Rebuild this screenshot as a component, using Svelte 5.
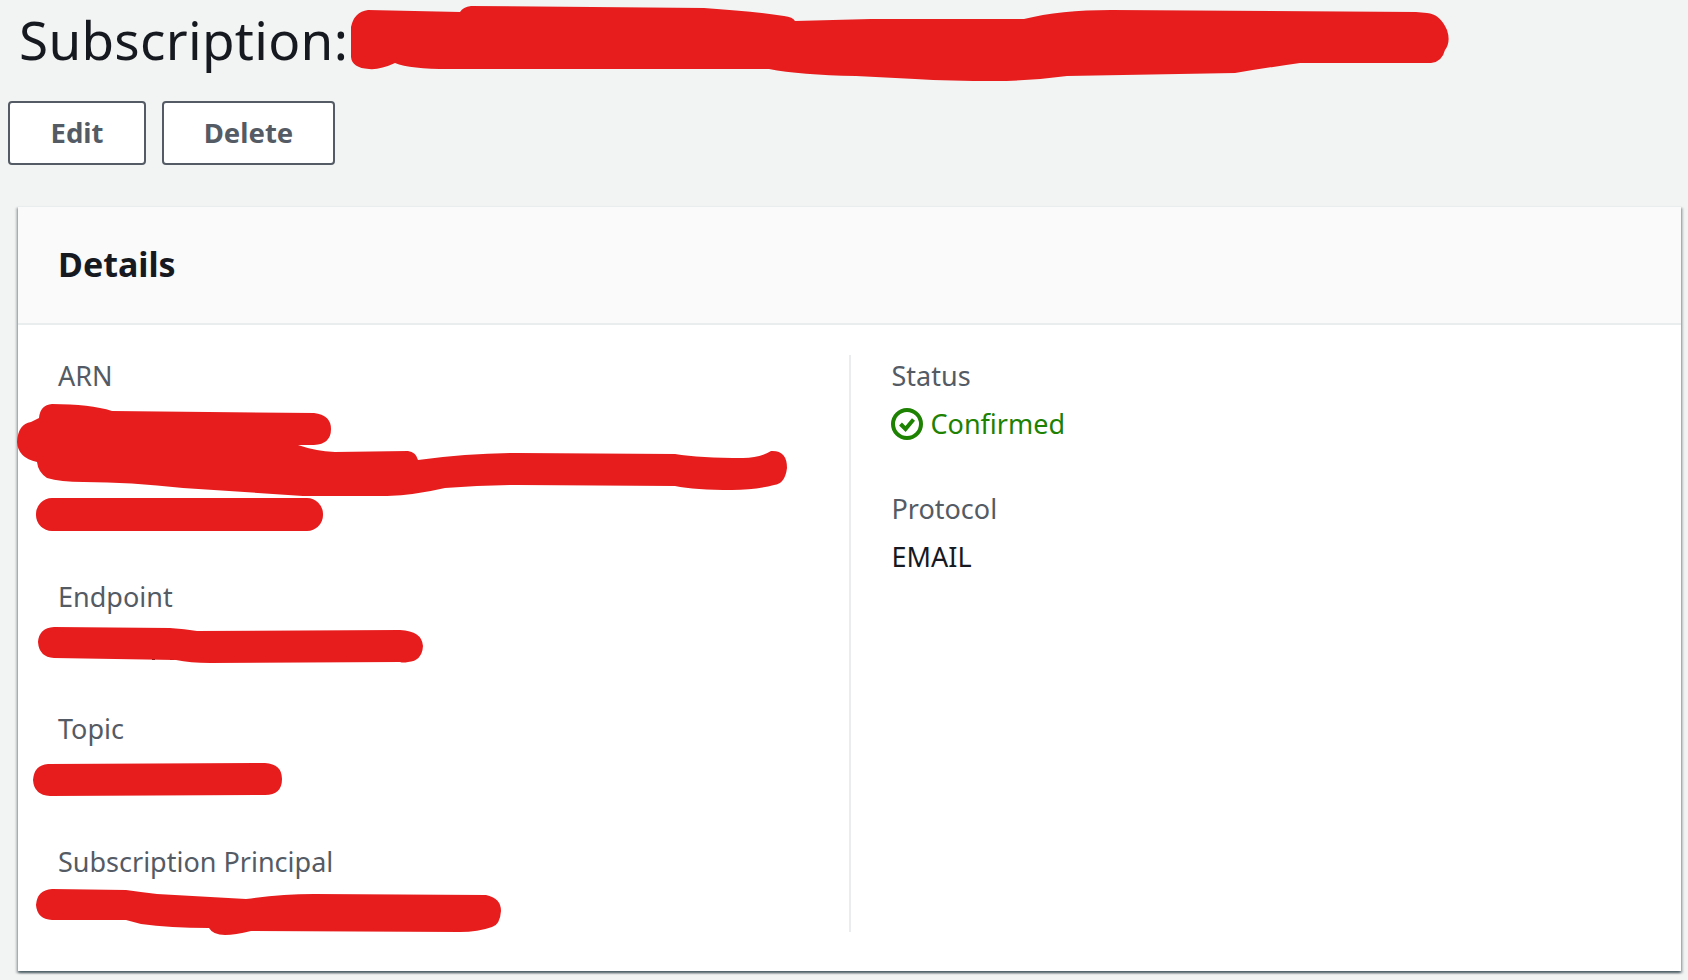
<script lang="ts">
  const leftFields = [
    { label: "ARN", lines: 3 },
    { label: "Endpoint", lines: 1 },
    { label: "Topic", lines: 1 },
    { label: "Subscription Principal", lines: 1 },
  ];
</script>

<div class="page">
  <h1 class="title">Subscription:</h1>

  <div class="actions">
    <button class="btn edit">Edit</button>
    <button class="btn delete">Delete</button>
  </div>

  <section class="card">
    <header class="card-head">
      <h2>Details</h2>
    </header>
    <div class="card-body">
      <div class="col">
        {#each leftFields as field}
          <div class="field">
            <div class="label">{field.label}</div>
            <div class="value" style="height: {field.lines * 44}px"></div>
          </div>
        {/each}
      </div>
      <div class="col right">
        <div class="field">
          <div class="label">Status</div>
          <div class="value status">
            <svg width="32" height="32" viewBox="0 0 32 32" fill="none" stroke="#1d8102" stroke-width="4">
              <circle cx="16" cy="16" r="14" />
              <polyline points="9.5,16 14.5,21 22.5,11.5" />
            </svg>
            <span>Confirmed</span>
          </div>
        </div>
        <div class="field">
          <div class="label">Protocol</div>
          <div class="value">EMAIL</div>
        </div>
      </div>
    </div>
  </section>

  <!-- red marker scribbles drawn over the page -->
  <svg class="scribbles" width="1688" height="980" viewBox="0 0 1688 980" fill="#e71d1d">
    <path d="M351 27 Q354 12 368 10 L460 12 Q463 7 471 6 L704 8 Q750 11 784 16 Q793 17 795 21 L871 19 L1024 19 Q1060 10 1111 10 L1416 12 L1427 13 Q1440 14 1447 30 Q1451 42 1445 50 Q1442 62 1431 63 L1300 63 Q1265 68 1235 73 L1067 76 Q1030 81 995 81 Q950 81 915 79 L856 76 Q800 75 769 69 L449 69 Q410 69 395 63 Q380 70 369 69 Q352 68 351 57 Z" />
    <path d="M39 418 Q40 405 52 404 Q90 404 112 411 L314 413 Q331 415 331 429 Q331 444 314 445 L298 445 Q315 451 335 452 L408 451 Q416 452 418 460 Q470 453 518 453 L675 454 Q700 458 743 458 Q760 458 771 451 Q787 450 787 468 Q785 484 774 485 Q755 490 732 490 Q695 490 675 486 L518 485 Q480 485 445 488 Q415 495 387 496 L303 496 L183 488 Q130 482 84 482 Q60 482 47 478 Q38 472 37 462 Q18 458 17 442 Q18 424 31 422 Z" />
    <rect x="36" y="498" width="287" height="33" rx="16" />
    <!-- bits of the endpoint text that stick out under the marker -->
    <rect x="152" y="655" width="3" height="5" fill="#16191f" />
    <rect x="170" y="655" width="4" height="5" fill="#16191f" />
    <path d="M38 642 Q39 628 54 627 L170 628 Q185 629 197 631 L400 630 Q422 631 423 646 Q422 661 408 662 Q403 663 400 662 L210 663 Q190 663 176 660 L54 658 Q39 657 38 642 Z" />
    <path d="M33 780 Q34 765 48 764 L265 763 Q282 764 282 779 Q282 795 265 795 L50 796 Q34 795 33 780 Z" />
    <path d="M36 905 Q37 890 52 889 L126 890 Q140 892 157 894 L246 899 Q280 894 314 894 L486 895 Q501 898 501 911 Q500 925 492 927 Q478 932 460 932 L251 931 Q235 935 225 935 Q213 935 209 928 Q170 928 141 924 L126 920 L52 920 Q37 919 36 905 Z" />
  </svg>
</div>

<style>
  :global(body) {
    margin: 0;
    background: #f2f3f3;
  }

  .page {
    position: relative;
    box-sizing: border-box;
    height: 980px;
    padding: 1px 7px 0 8px;
    font-family: "Noto Sans", "Liberation Sans", sans-serif;
    color: #16191f;
    overflow: hidden;
  }

  .title {
    margin: 0 0 0 11px;
    font-size: 53px;
    font-weight: 400;
    line-height: 78px;
    letter-spacing: 0.3px;
  }

  .actions {
    display: flex;
    gap: 16px;
    margin-top: 22px;
  }

  .btn {
    box-sizing: border-box;
    height: 64px;
    background: #fff;
    border: 2px solid #545b64;
    border-radius: 4px;
    color: #545b64;
    font-family: inherit;
    font-size: 27.5px;
    font-weight: 700;
    padding: 0 0 2px;
  }
  .btn.edit {
    width: 138px;
  }
  .btn.delete {
    width: 173px;
  }

  .card {
    margin: 41px 0 0 10px;
    background: #fff;
    box-shadow:
      0 2px 2px 0 rgba(0, 28, 36, 0.5),
      2px 2px 2px 0 rgba(0, 28, 36, 0.2),
      -2px 2px 2px 0 rgba(0, 28, 36, 0.2);
    border-top: 1px solid #eaeded;
  }

  .card-head {
    box-sizing: border-box;
    height: 118px;
    padding: 0 40px 2px;
    display: flex;
    align-items: center;
    background: #fafafa;
    border-bottom: 2px solid #eaeded;
  }
  .card-head h2 {
    margin: 0;
    font-size: 34px;
    font-weight: 700;
  }

  .card-body {
    display: grid;
    grid-template-columns: 1fr 1fr;
    padding: 30px 40px 39px;
  }

  .col.right {
    margin-left: -1px;
    border-left: 2px solid #eaeded;
    padding-left: 41px;
  }

  .field {
    margin-bottom: 40.5px;
  }
  .field:first-child {
    margin-top: -1px;
  }
  .field:last-child {
    margin-bottom: 0;
  }

  .label {
    color: #545b64;
    font-size: 27px;
    line-height: 44px;
    margin-bottom: 4px;
  }

  .value {
    font-size: 27px;
    line-height: 44px;
  }

  .status {
    display: flex;
    align-items: center;
    gap: 8px;
    color: #1d8102;
  }

  .status svg {
    margin-left: -1px;
  }

  .scribbles {
    position: absolute;
    left: 0;
    top: 0;
  }
</style>
